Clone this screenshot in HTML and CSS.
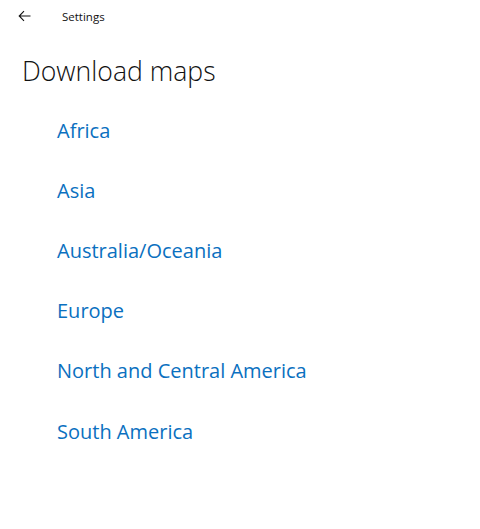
FILE: index.html
```html
<!DOCTYPE html>
<html lang="en">
<head>
<meta charset="utf-8">
<title>Settings</title>
<link rel="stylesheet" href="styles.css">
</head>
<body>
<header class="titlebar">
  <button class="back" aria-label="Back">
    <svg width="13" height="12" viewBox="0 0 13 12"><path d="M12.5 6H1.2M6 1.2L1.2 6 6 10.8" fill="none" stroke="#111" stroke-width="1.1"/></svg>
  </button>
  <span class="app-title">Settings</span>
</header>
<main class="page">
  <h1 class="heading">Download maps</h1>
  <ul class="regions">
    <li><a href="#">Africa</a></li>
    <li><a href="#">Asia</a></li>
    <li><a href="#">Australia/Oceania</a></li>
    <li><a href="#">Europe</a></li>
    <li><a href="#">North and Central America</a></li>
    <li><a href="#">South America</a></li>
  </ul>
</main>
</body>
</html>
```
FILE: styles.css
```css
* { box-sizing: border-box; }

html, body {
  margin: 0;
  background: #ffffff;
  font-family: "Open Sans", "Noto Sans", "Liberation Sans", sans-serif;
  color: #000;
}

.titlebar {
  display: flex;
  align-items: center;
  height: 32px;
  padding-left: 12px;
}

.back {
  display: flex;
  align-items: center;
  justify-content: center;
  width: 24px;
  height: 24px;
  padding: 0;
  border: 0;
  background: none;
}

.app-title {
  margin-left: 26px;
  font-size: 11.5px;
  color: #111;
}

.page {
  padding-left: 22px;
}

.heading {
  margin: 22px 0 0;
  font-size: 26.6px;
  font-weight: 300;
  line-height: 34px;
  color: #111;
}

.regions {
  list-style: none;
  margin: 12px 0 0;
  padding: 0 0 0 35px;
}

.regions li {
  height: 60.2px;
  display: flex;
  align-items: center;
}

.regions a {
  font-size: 20px;
  color: #0a70c0;
  text-decoration: none;
}
```
